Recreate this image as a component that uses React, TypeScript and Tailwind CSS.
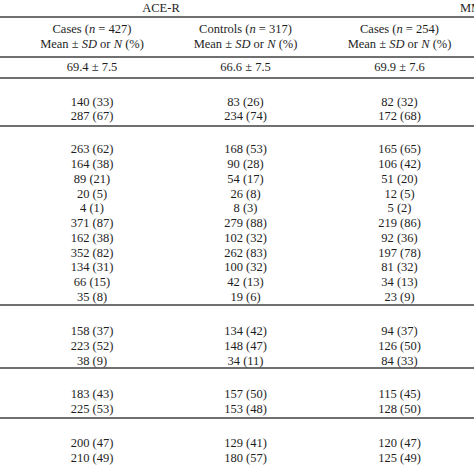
import React from "react";

const sections: { pt: string; h: string; rows: string[][] }[] = [
  {
    pt: "pt-[15.5px]",
    h: "h-[48px]",
    rows: [
      ["140 (33)", "83 (26)", "82 (32)"],
      ["287 (67)", "234 (74)", "172 (68)"],
    ],
  },
  {
    pt: "pt-[15.3px]",
    h: "h-[179px]",
    rows: [
      ["263 (62)", "168 (53)", "165 (65)"],
      ["164 (38)", "90 (28)", "106 (42)"],
      ["89 (21)", "54 (17)", "51 (20)"],
      ["20 (5)", "26 (8)", "12 (5)"],
      ["4 (1)", "8 (3)", "5 (2)"],
      ["371 (87)", "279 (88)", "219 (86)"],
      ["162 (38)", "102 (32)", "92 (36)"],
      ["352 (82)", "262 (83)", "197 (78)"],
      ["134 (31)", "100 (32)", "81 (32)"],
      ["66 (15)", "42 (13)", "34 (13)"],
      ["35 (8)", "19 (6)", "23 (9)"],
    ],
  },
  {
    pt: "pt-[18px]",
    h: "h-[63px]",
    rows: [
      ["158 (37)", "134 (42)", "94 (37)"],
      ["223 (52)", "148 (47)", "126 (50)"],
      ["38 (9)", "34 (11)", "84 (33)"],
    ],
  },
  {
    pt: "pt-[18px]",
    h: "h-[50px]",
    rows: [
      ["183 (43)", "157 (50)", "115 (45)"],
      ["225 (53)", "153 (48)", "128 (50)"],
    ],
  },
  {
    pt: "pt-[17px]",
    h: "h-[60px]",
    rows: [
      ["200 (47)", "129 (41)", "120 (47)"],
      ["210 (49)", "180 (57)", "125 (49)"],
    ],
  },
];

const grid = "grid grid-cols-[154px_153px_155px]";

function Row({ cells }: { cells: string[] }) {
  return (
    <div className={`${grid} h-[14.76px] leading-[14.76px]`}>
      {cells.map((c, i) => (
        <div key={i} className="text-center whitespace-nowrap">
          {c}
        </div>
      ))}
    </div>
  );
}

export default function App() {
  return (
    <div
      className="w-[474px] h-[474px] overflow-hidden bg-white text-[#1e1e1e] text-[12.5px]"
      style={{ fontFamily: '"Liberation Serif", "Times New Roman", serif' }}
    >
      <div className="w-[474px]">
        {/* spanner row */}
        <div className="flex h-[18px] border-b-2 border-[#707070] leading-[16px] overflow-hidden">
          <div className="w-[322px] shrink-0 text-center">ACE-R</div>
          <div className="w-[152px] shrink-0 pl-[138px] whitespace-nowrap">MM</div>
        </div>
        {/* header */}
        <div className={`${grid} pl-[15px] h-[40px] border-b-2 border-[#707070] items-center leading-[15px]`}>
          <div className="text-center whitespace-nowrap">
            Cases (<i>n</i> = 427)
            <br />
            Mean ± <i>SD</i> or <i>N</i> (%)
          </div>
          <div className="text-center whitespace-nowrap">
            Controls (<i>n</i> = 317)
            <br />
            Mean ± <i>SD</i> or <i>N</i> (%)
          </div>
          <div className="text-center whitespace-nowrap">
            Cases (<i>n</i> = 254)
            <br />
            Mean ± <i>SD</i> or <i>N</i> (%)
          </div>
        </div>
        {/* age row */}
        <div className={`${grid} pl-[15px] h-[21px] border-b-2 border-[#707070] items-center`}>
          <div className="text-center">69.4 ± 7.5</div>
          <div className="text-center">66.6 ± 7.5</div>
          <div className="text-center">69.9 ± 7.6</div>
        </div>
        {sections.map((s, si) => (
          <div
            key={si}
            className={`${s.h} ${s.pt} pl-[15px] ${si < sections.length - 1 ? "border-b-2 border-[#707070]" : ""}`}
          >
            {s.rows.map((r, ri) => (
              <Row key={ri} cells={r} />
            ))}
          </div>
        ))}
      </div>
    </div>
  );
}
